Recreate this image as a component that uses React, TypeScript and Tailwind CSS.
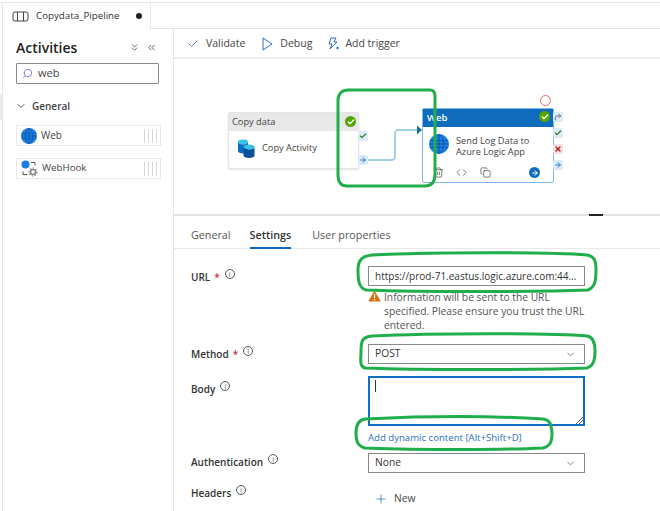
import React from "react";
import { Check, ChevronDown, ChevronsDown, ChevronsLeft, Search, Plus, Trash2, Code, Copy, ArrowRight, X, CornerUpRight } from "lucide-react";

const Font = { fontFamily: '"Open Sans","Noto Sans",sans-serif' };

function InfoDot({ className = "" }: { className?: string }) {
  return (
    <span className={"inline-flex h-[10px] w-[10px] items-center justify-center rounded-full border border-[#555] text-[7px] font-normal leading-none text-[#555] " + className}>
      i
    </span>
  );
}

function Globe({ size }: { size: number }) {
  return (
    <svg width={size} height={size} viewBox="0 0 24 24" className="shrink-0">
      <circle cx="12" cy="12" r="12" fill="#1a7fe0" />
      <g fill="none" stroke="#0b4fa0" strokeWidth="1">
        <ellipse cx="12" cy="12" rx="5.5" ry="11.5" />
        <path d="M12 0.5v23M1 8h22M1 16h22M0.5 12h23" />
      </g>
    </svg>
  );
}

function Tile({ children }: { children: React.ReactNode }) {
  return (
    <div className="flex h-[21px] w-[145px] items-center border border-[#e8e8e8] bg-white pl-[4px] text-[10px] text-[#444]">
      {children}
      <span className="ml-auto mr-[3px] flex gap-[3px]">
        <i className="h-[14px] w-px bg-[#d8d8d8]" />
        <i className="h-[14px] w-px bg-[#d8d8d8]" />
        <i className="h-[14px] w-px bg-[#d8d8d8]" />
        <i className="h-[14px] w-px bg-[#d8d8d8]" />
      </span>
    </div>
  );
}

function Port({ children, className = "" }: { children: React.ReactNode; className?: string }) {
  return (
    <div className={"absolute flex h-[10px] w-[10px] items-center justify-center rounded-[2px] bg-[#dcebfa] " + className}>
      {children}
    </div>
  );
}

function StatusOk({ className = "" }: { className?: string }) {
  return (
    <span className={"absolute flex h-[11px] w-[11px] items-center justify-center rounded-full bg-[#57a300] " + className}>
      <Check size={8} strokeWidth={4} color="#fff" />
    </span>
  );
}

function Field({ label, req, top, pad, children }: { label: string; req?: boolean; top: string; pad: string; children?: React.ReactNode }) {
  return (
    <div className={"flex " + top}>
      <div className={"flex w-[177px] shrink-0 items-start text-[10px] font-semibold leading-[14px] text-[#333] " + pad}>
        <span>{label}</span>
        {req && <span className="ml-[4px] text-[#c4314b]">*</span>}
        <InfoDot className="ml-[5px] mt-[-1px]" />
      </div>
      <div className="w-[217px]">{children}</div>
    </div>
  );
}

function Select({ value }: { value: string }) {
  return (
    <div className="flex h-[20px] items-center justify-between border border-[#8a8886] pl-[6px] pr-[8px] text-[10.25px] text-[#333]">
      <span>{value}</span>
      <ChevronDown size={11} color="#777" />
    </div>
  );
}

export default function App() {
  return (
    <div style={Font} className="relative flex h-[511px] w-[660px] flex-col overflow-hidden bg-white text-[#333]">
      {/* Tab strip */}
      <div className="mt-[2px] flex h-[27px] shrink-0 border-t border-[#e6e6e6]">
        <div className="ml-[2px] flex w-[149px] items-center border-l border-r border-[#e6e6e6] pl-[9px] text-[9.75px] text-[#333]">
          <svg width="17" height="11" viewBox="0 0 17 11" fill="none" stroke="#444" strokeWidth="1" className="mr-[7px]">
            <path d="M3 1h11a2 2 0 0 1 2 2v5a2 2 0 0 1-2 2H3a2 2 0 0 1-2-2V3a2 2 0 0 1 2-2z" />
            <path d="M5.500 1v9M11.500 1v9" />
          </svg>
          <span>Copydata_Pipeline</span>
          <span className="ml-auto mr-[8px] h-[6px] w-[6px] rounded-full bg-[#222]" />
        </div>
        <div className="flex-1 border-b border-[#e6e6e6]" />
      </div>

      <div className="flex min-h-0 flex-1">
        {/* Sidebar */}
        <aside className="ml-[2px] flex w-[172px] shrink-0 flex-col border-x border-[#e6e6e6] pl-[13px]">
          <div className="mt-[6px] flex h-[24px] items-center">
            <span className="text-[14px] font-semibold text-[#222]">Activities</span>
            <ChevronsDown size={11} color="#555" className="ml-[52px]" />
            <ChevronsLeft size={11} color="#555" className="ml-[6px]" />
          </div>
          <div className="mt-[4px] flex h-[21px] w-[143px] items-center rounded-[1px] border border-[#8a8886] pl-[5px] text-[11px] text-[#444]">
            <Search size={11} color="#7a78e0" className="-scale-x-100" />
            <span className="ml-[5px]">web</span>
          </div>
          <div className="mt-[14px] flex h-[16px] items-center text-[10px] font-semibold text-[#444]">
            <ChevronDown size={12} color="#555" className="-ml-[1px] mr-[5px]" />
            General
          </div>
          <div className="mt-[11px]">
            <Tile>
              <Globe size={16} />
              <span className="ml-[4px]">Web</span>
            </Tile>
          </div>
          <div className="mt-[12px]">
            <Tile>
              <svg width="17" height="17" viewBox="0 0 17 17" className="shrink-0">
                <circle cx="4.500" cy="4.500" r="4" fill="#1a7fe0" />
                <path d="M10 2.500h4v3M6 14.500H2v-3" fill="none" stroke="#555" strokeWidth="1" />
                <circle cx="12" cy="12" r="2.500" fill="none" stroke="#888" strokeWidth="1.500" />
                <circle cx="12" cy="12" r="4" fill="none" stroke="#888" strokeWidth="1.200" strokeDasharray="1.500 1.500" />
              </svg>
              <span className="ml-[4px] text-[9.75px]">WebHook</span>
            </Tile>
          </div>
        </aside>

        {/* Main */}
        <main className="flex min-w-0 flex-1 flex-col">
          {/* Toolbar */}
          <div className="flex h-[30px] shrink-0 items-center border-b-2 border-[#eeeeee] pl-[13px] pt-[2px] text-[10.5px] text-[#444]">
            <Check size={12} color="#2b6fc4" strokeWidth={1.5} />
            <span className="ml-[7px]">Validate</span>
            <svg width="11" height="14" viewBox="0 0 11 14" fill="none" stroke="#2b6fc4" strokeWidth="1" className="ml-[17px]">
              <path d="M1 1l9 6-9 6z" />
            </svg>
            <span className="ml-[7px]">Debug</span>
            <svg width="14" height="14" viewBox="0 0 14 14" fill="none" stroke="#2b6fc4" strokeWidth="1" className="ml-[14px]">
              <path d="M5 1h5L8 5h3l-7 7 2-5H3z" />
              <circle cx="11.500" cy="11" r="1.200" fill="#2b6fc4" stroke="none" />
            </svg>
            <span className="ml-[5px]">Add trigger</span>
          </div>

          {/* Canvas */}
          <div className="relative h-[157px] shrink-0 border-b-2 border-[#e3e3e3]">
            {/* Copy node */}
            <div className="absolute left-[54px] top-[53px] h-[57px] w-[131px] rounded-[2px] border border-[#e4e4e4] bg-white shadow-[0_1px_2px_rgba(0,0,0,0.12)]">
              <div className="flex h-[18px] items-center bg-[#e8e8e8] pl-[3px] text-[9.25px] text-[#444]">Copy data</div>
              <div className="mt-[8px] flex items-start pl-[8px] text-[9.25px] text-[#444]">
                <svg width="18" height="19" viewBox="0 0 18 19">
                  <ellipse cx="6" cy="3" rx="5" ry="2.400" fill="#39c2e8" />
                  <path d="M1 3v9c0 1.300 2.200 2.400 5 2.400s5-1 5-2.400V3c0 1.300-2.200 2.400-5 2.400S1 4.300 1 3" fill="#0a6cc0" />
                  <ellipse cx="12" cy="8" rx="5.500" ry="2.400" fill="#39c2e8" />
                  <path d="M6.500 8v8.500c0 1.300 2.400 2.400 5.500 2.400s5.500-1 5.500-2.400V8c0 1.300-2.400 2.400-5.500 2.400S6.500 9.300 6.500 8" fill="#08509a" />
                </svg>
                <span className="ml-[7px] mt-[2px]">Copy Activity</span>
              </div>
            </div>
            <StatusOk className="left-[171px] top-[57px]" />
            <Port className="left-[184px] top-[72px]">
              <Check size={8} strokeWidth={3.500} color="#2e7d10" />
            </Port>
            <Port className="left-[184px] top-[96px]">
              <ArrowRight size={8} strokeWidth={3} color="#2b78d0" />
            </Port>

            {/* Connector, a drawing */}
            <svg className="absolute left-[184px] top-[60px]" width="72" height="50" viewBox="0 0 72 50" fill="none">
              <path d="M10 41h24c2 0 3-1 3-3V14c0-2 1-3 3-3h20" stroke="#4aa0c8" strokeWidth="1" />
              <path d="M59 6.500l5 4.500-5 4.500z" fill="#1a7090" />
            </svg>

            {/* Web node */}
            <div className="absolute left-[248px] top-[49px] h-[75px] w-[132px] rounded-[2px] border border-[#7db6e8] bg-white">
              <div className="flex h-[18px] items-center bg-[#0f6cbd] pl-[4px] text-[9.5px] font-semibold text-white">Web</div>
              <div className="mt-[7px] flex items-start pl-[6px] text-[9.25px] leading-[11px] text-[#444]">
                <Globe size={20} />
                <span className="ml-[7px] mt-[1px]">Send Log Data to<br />Azure Logic App</span>
              </div>
              <div className="absolute bottom-[4px] left-[10px] flex items-center">
                <Trash2 size={11} color="#444" strokeWidth={1.500} />
                <Code size={11} color="#444" strokeWidth={1.500} className="ml-[12px]" />
                <Copy size={11} color="#444" strokeWidth={1.500} className="ml-[13px]" />
              </div>
              <span className="absolute bottom-[4px] right-[13px] flex h-[11px] w-[11px] items-center justify-center rounded-full bg-[#0f6cbd]">
                <ArrowRight size={8} strokeWidth={3} color="#fff" />
              </span>
            </div>
            <StatusOk className="left-[365px] top-[52px]" />
            <span className="absolute left-[366px] top-[36px] h-[11px] w-[11px] rounded-full border border-[#ef6a6a]" />
            <Port className="left-[379px] top-[53px]">
              <CornerUpRight size={8} strokeWidth={2.500} color="#666" />
            </Port>
            <Port className="left-[379px] top-[69px]">
              <Check size={8} strokeWidth={3.500} color="#2e7d10" />
            </Port>
            <Port className="left-[379px] top-[85px] bg-[#f6e0e0]">
              <X size={8} strokeWidth={4} color="#b02020" />
            </Port>
            <Port className="left-[379px] top-[101px]">
              <ArrowRight size={8} strokeWidth={3} color="#2b78d0" />
            </Port>
            <span className="absolute bottom-[-2px] left-[415px] h-[2px] w-[14px] bg-[#222]" />
          </div>

          {/* Tabs */}
          <div className="mt-[8px] flex h-[25px] shrink-0 border-b border-[#e8e8e8] pl-[17px] text-[10.75px] text-[#555]">
            <span className="pt-[3px]">General</span>
            <span className="relative ml-[19px] pt-[3px] font-semibold text-[#333]">
              Settings
              <span className="absolute -bottom-px left-0 right-0 h-[2px] bg-[#0f6cbd]" />
            </span>
            <span className="ml-[21px] pt-[3px]">User properties</span>
          </div>

          {/* Form */}
          <div className="pl-[17px]">
            <Field label="URL" req top="mt-[17px]" pad="pt-[4px]">
              <div className="flex h-[20px] items-center overflow-hidden whitespace-nowrap border border-[#8a8886] pl-[6px] text-[10px] text-[#333]">
                https://prod-71.eastus.logic.azure.com:44...
              </div>
              <div className="relative mt-[4px] pl-[16px] text-[10.25px] leading-[14px] text-[#555]">
                <svg width="13" height="12" viewBox="0 0 13 12" className="absolute left-0 top-0">
                  <path d="M6.500 0.500L12.800 11.500H0.200z" fill="#d9700f" />
                  <rect x="5.900" y="4" width="1.300" height="4" fill="#fff" />
                  <rect x="5.900" y="9" width="1.300" height="1.300" fill="#fff" />
                </svg>
                Information will be sent to the URL specified. Please ensure you trust the URL entered.
              </div>
            </Field>
            <Field label="Method" req top="mt-[12px]" pad="pt-[3px]">
              <Select value="POST" />
            </Field>
            <Field label="Body" top="mt-[12px]" pad="pt-[6px]">
              <div className="relative h-[50px] border-2 border-[#0f6fc6]">
                <span className="absolute left-[5px] top-[2px] h-[12px] w-px bg-[#333]" />
                <svg width="8" height="8" viewBox="0 0 8 8" className="absolute bottom-0 right-0" stroke="#555" strokeWidth="1">
                  <path d="M1 8L8 1M4 8l4-4" />
                </svg>
              </div>
              <div className="mt-[5px] text-[9.6px] leading-[14px] text-[#2b70c0]">Add dynamic content [Alt+Shift+D]</div>
            </Field>
            <Field label="Authentication" top="mt-[8px]" pad="pt-[2px]">
              <Select value="None" />
            </Field>
            <Field label="Headers" top="mt-[13px]" pad="pt-0">
              <div className="mt-[1px] ml-[6px] flex h-[24px] items-center text-[10.25px] text-[#444]">
                <Plus size={14} color="#2b6fc4" strokeWidth={1.250} />
                <span className="ml-[6px]">New</span>
              </div>
            </Field>
          </div>
        </main>
      </div>

      {/* Sidebar edge mark */}
      <span className="absolute left-0 top-[94px] h-[26px] w-[2px] bg-[#ececec]" />

      {/* Green hand-drawn annotations */}
      <svg className="pointer-events-none absolute left-0 top-0" width="660" height="511" viewBox="0 0 660 511" fill="none" stroke="#1fae4b" strokeWidth="3">
        <path d="M348 90h82c3 0 5 2 5 6v78c0 7-3 12-10 12h-78c-6 0-9-4-9-10V100c0-6 4-10 10-10z" />
        <path d="M372 255c60-3 180-3 215 0 7 1 9 5 9 15 0 11-1 17-8 20-50 2-170 2-222 0-7-2-8-9-8-20 0-10 4-14 14-15z" />
        <path d="M372 336c60-3 180-3 215 0 6 1 8 7 8 15 0 10-2 15-8 17-50 2-170 2-222 0-6-2-4-9-4-17 0-10 1-14 11-15z" />
        <path d="M365 419c60-3 130-3 178 0 7 1 8 5 9 13 0 9-1 14-9 16-40 2-120 2-178 0-8-2-9-8-9-15 0-8 2-13 9-14z" />
      </svg>
    </div>
  );
}
